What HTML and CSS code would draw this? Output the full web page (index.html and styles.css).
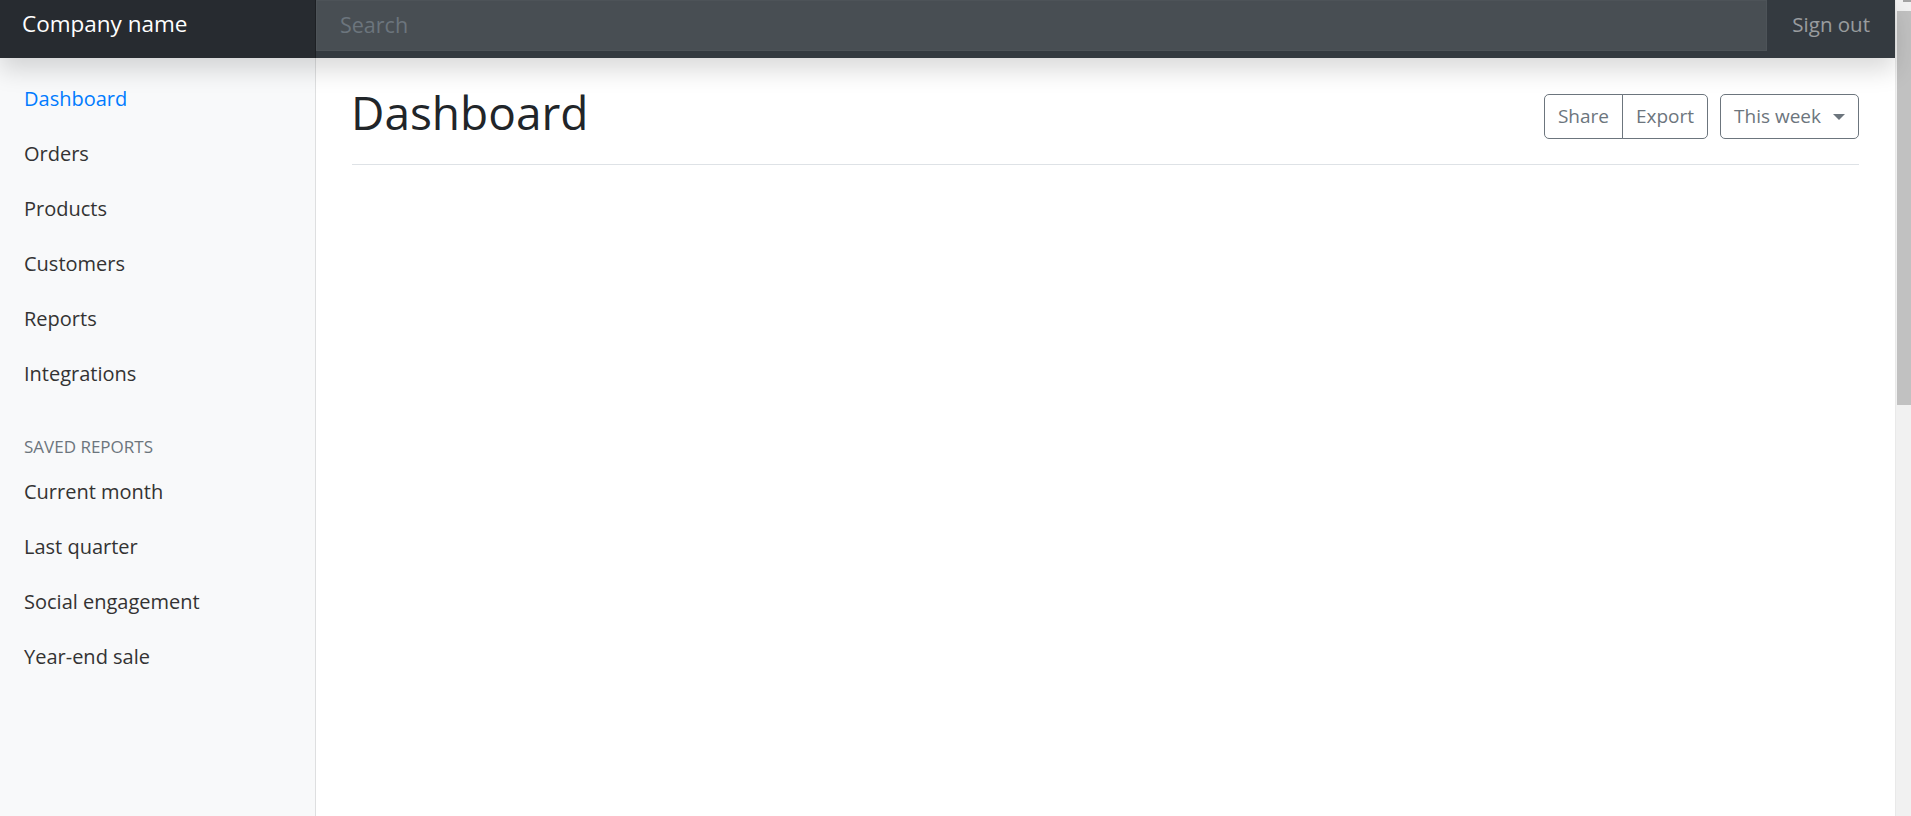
FILE: index.html
```html
<!DOCTYPE html>
<html lang="en">
<head>
<meta charset="utf-8">
<title>Dashboard</title>
<link rel="stylesheet" href="styles.css">
</head>
<body>
<div class="page">
  <header class="navbar">
    <a class="brand" href="#">Company name</a>
    <input class="search" type="text" placeholder="Search" aria-label="Search">
    <a class="signout" href="#">Sign out</a>
  </header>
  <div class="layout">
    <nav class="sidebar">
      <ul class="nav">
        <li><a class="nav-link active" href="#">Dashboard</a></li>
        <li><a class="nav-link" href="#">Orders</a></li>
        <li><a class="nav-link" href="#">Products</a></li>
        <li><a class="nav-link" href="#">Customers</a></li>
        <li><a class="nav-link" href="#">Reports</a></li>
        <li><a class="nav-link" href="#">Integrations</a></li>
      </ul>
      <h6 class="sidebar-heading">Saved reports</h6>
      <ul class="nav">
        <li><a class="nav-link" href="#">Current month</a></li>
        <li><a class="nav-link" href="#">Last quarter</a></li>
        <li><a class="nav-link" href="#">Social engagement</a></li>
        <li><a class="nav-link" href="#">Year-end sale</a></li>
      </ul>
    </nav>
    <main class="main">
      <div class="page-header">
        <h1 class="title">Dashboard</h1>
        <div class="toolbar">
          <div class="btn-group">
            <button class="btn" type="button">Share</button>
            <button class="btn" type="button">Export</button>
          </div>
          <button class="btn dropdown" type="button">This week<span class="caret"></span></button>
        </div>
      </div>
    </main>
  </div>
</div>
<div class="scrollbar" aria-hidden="true">
  <div class="scroll-arrow"></div>
  <div class="scroll-thumb"></div>
</div>
</body>
</html>
```

FILE: styles.css
```css
* {
  box-sizing: border-box;
}

html, body {
  margin: 0;
  padding: 0;
}

body {
  display: flex;
  height: 100vh;
  overflow: hidden;
  font-family: "Open Sans", "Noto Sans", sans-serif;
  color: #212529;
  background: #fff;
}

a {
  text-decoration: none;
}

.page {
  flex: 1;
  min-width: 0;
  display: flex;
  flex-direction: column;
}

.navbar {
  flex: none;
  display: flex;
  height: 58px;
  background: #343a40;
  box-shadow: 0 12px 24px rgba(0, 0, 0, 0.15);
  position: relative;
  z-index: 2;
}

.brand {
  flex: none;
  width: 316px;
  padding: 9px 0 0 22px;
  font-size: 22.5px;
  line-height: 30px;
  color: #fff;
  background: rgba(0, 0, 0, 0.25);
  box-shadow: inset -1px 0 0 rgba(0, 0, 0, 0.25);
}

.search {
  flex: 1;
  min-width: 0;
  align-self: flex-start;
  height: 51px;
  margin: 0;
  padding: 0 0 3px 23px;
  font-family: inherit;
  font-size: 21.5px;
  color: #fff;
  background: rgba(255, 255, 255, 0.1);
  border: 1px solid rgba(255, 255, 255, 0.03);
  border-radius: 0;
  outline: none;
}

.search::placeholder {
  color: #6c757d;
}

.signout {
  flex: none;
  padding: 9px 25px 0;
  font-size: 20.5px;
  line-height: 30px;
  color: rgba(255, 255, 255, 0.5);
}

.layout {
  flex: 1;
  display: flex;
}

.sidebar {
  flex: none;
  width: 316px;
  padding-top: 13px;
  background: #f8f9fa;
  box-shadow: inset -1px 0 0 rgba(0, 0, 0, 0.1);
}

.nav {
  list-style: none;
  margin: 0;
  padding: 0;
}

.nav-link {
  display: block;
  padding: 12px 24px;
  font-size: 20px;
  line-height: 31px;
  font-weight: 500;
  color: #333;
}

.nav-link.active {
  color: #007bff;
}

.sidebar-heading {
  margin: 33px 0 5px;
  padding: 0 24px;
  font-size: 17px;
  line-height: 25px;
  font-weight: 500;
  text-transform: uppercase;
  color: #6c757d;
}

.main {
  flex: 1;
  padding: 0 36px;
}

.page-header {
  display: flex;
  justify-content: space-between;
  align-items: flex-start;
  padding: 27px 0 25px;
  border-bottom: 1px solid #dee2e6;
}

.title {
  margin: 0 0 0 -1px;
  font-size: 46px;
  line-height: 54px;
  font-weight: 500;
  color: #212529;
}

.toolbar {
  display: flex;
  margin-top: 9px;
}

.btn-group {
  display: flex;
  margin-right: 12px;
}

.btn {
  display: flex;
  align-items: center;
  margin: 0;
  padding: 7px 13px;
  font-family: inherit;
  font-size: 19px;
  line-height: 29px;
  color: #6c757d;
  background: transparent;
  border: 1px solid #6c757d;
  border-radius: 5px;
}

.btn-group .btn:first-child {
  border-top-right-radius: 0;
  border-bottom-right-radius: 0;
}

.btn-group .btn + .btn {
  margin-left: -1px;
  border-top-left-radius: 0;
  border-bottom-left-radius: 0;
}

.caret {
  display: inline-block;
  width: 0;
  height: 0;
  margin-left: 12px;
  border-top: 6px solid #6c757d;
  border-left: 6px solid transparent;
  border-right: 6px solid transparent;
}

.scrollbar {
  flex: none;
  width: 16px;
  display: flex;
  flex-direction: column;
  align-items: flex-end;
  background: #f1f1f1;
  box-shadow: inset 1px 0 0 #e9e9e9;
}

.scroll-arrow {
  width: 8px;
  height: 2px;
  background: #a3a3a3;
}

.scroll-thumb {
  width: 14px;
  height: 394px;
  margin-top: 9px;
  background: #c1c1c1;
}
```
